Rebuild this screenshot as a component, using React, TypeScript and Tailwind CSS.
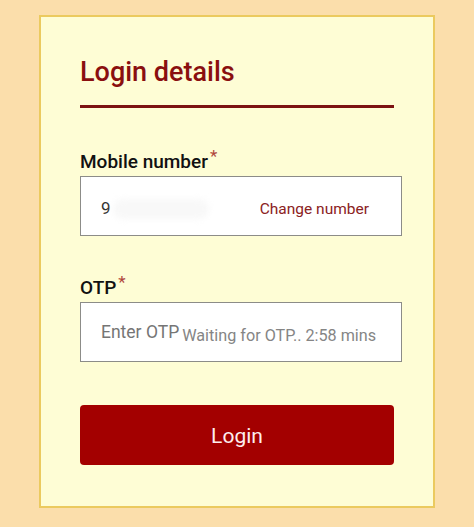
import React from 'react';

function FieldLabel({ text }: { text: string }) {
  return (
    <div className="flex items-start text-[19px] leading-[24px] font-medium text-[#111111]">
      <span>{text}</span>
      <span className="ml-[2px] -mt-[6px] text-[17px] font-normal text-[#b0463c]">*</span>
    </div>
  );
}

export default function App() {
  return (
    <div
      className="w-[474px] h-[527px] bg-[#fbdeab] pt-[15px] pl-[39px]"
      style={{ fontFamily: 'Roboto, "Liberation Sans", sans-serif' }}
    >
      <div className="w-[396px] h-[493px] border-2 border-[#ebca5f] bg-[#fefdd5] pl-[39px] pt-[40px]">
        <div className="w-[322px] flex flex-col">
          <h1 className="text-[27px] leading-[30px] font-medium text-[#8a0f0f]">Login details</h1>
          <div className="mt-[18px] w-[314px] h-[3px] bg-[#7c1212]" />

          <div className="mt-[42px]">
            <FieldLabel text="Mobile number" />
          </div>
          <div className="mt-[2px] h-[60px] border-[1.5px] border-[#8c8c88] bg-white flex items-center pl-[20px] pr-[32px]">
            <div className="mt-[6px] flex items-center">
              <span className="text-[17px] text-[#333]">9</span>
              <div className="ml-[2px] w-[96px] h-[20px] rounded-full bg-[#f8f8f8] blur-[3px]" />
            </div>
            <span className="ml-auto mt-[7px] text-[15.5px] text-[#8b2222]">Change number</span>
          </div>

          <div className="mt-[40px]">
            <FieldLabel text="OTP" />
          </div>
          <div className="mt-[2px] h-[60px] border-[1.5px] border-[#8c8c88] bg-white flex items-center pl-[20px]">
            <span className="text-[17.5px] text-[#757575]">Enter OTP</span>
            <span className="ml-[3px] mt-[8px] text-[16.2px] text-[#858585]">Waiting for OTP.. 2:58 mins</span>
          </div>

          <button className="mt-[43px] w-[314px] h-[60px] rounded-[4px] bg-[#a30000] pt-[3px] text-[21px] text-[#fdeeee] flex items-center justify-center">
            Login
          </button>
        </div>
      </div>
    </div>
  );
}
